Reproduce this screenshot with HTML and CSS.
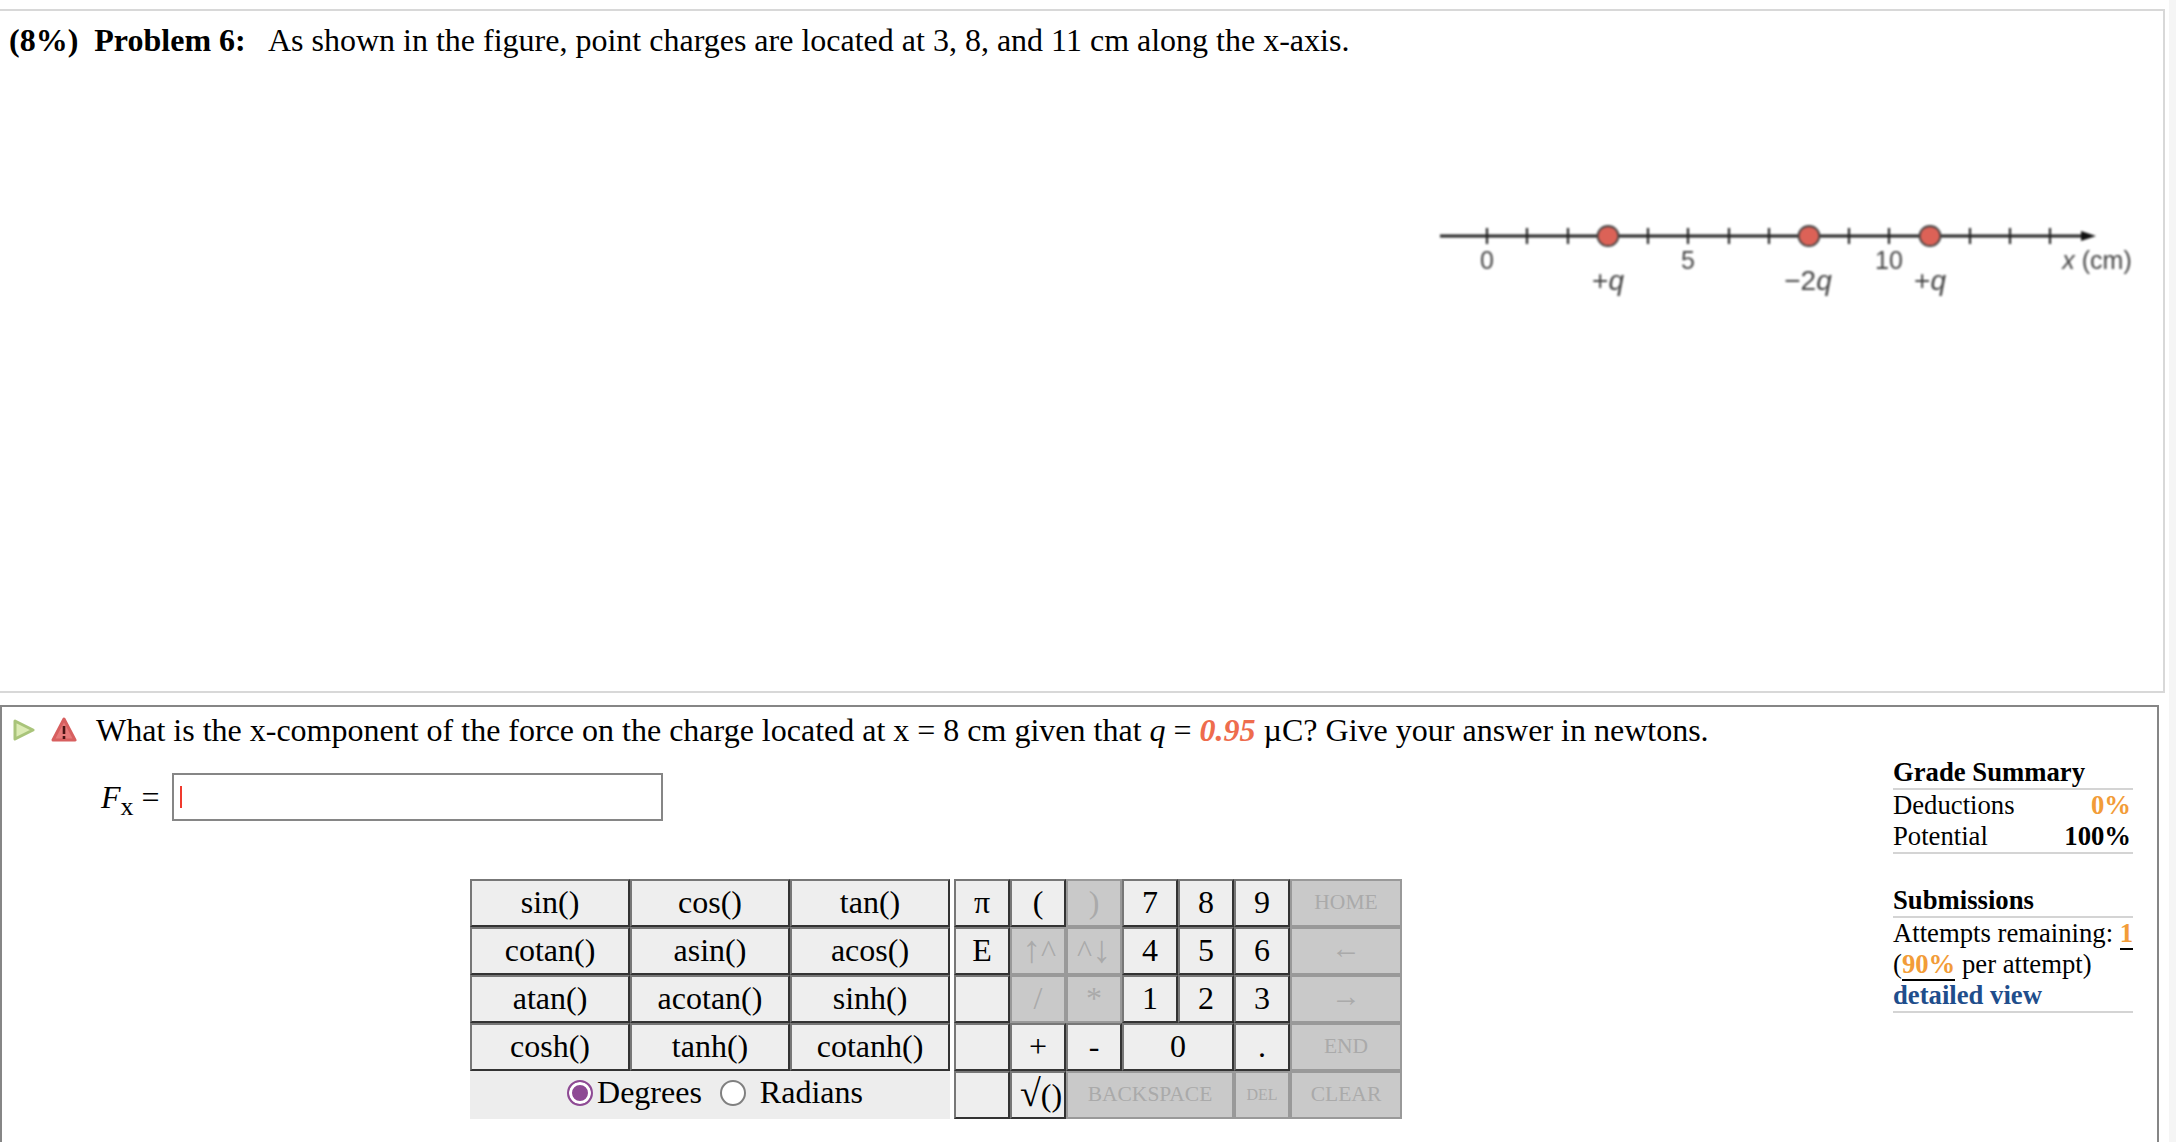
FILE: index.html
```html
<!DOCTYPE html>
<html lang="en">
<head>
<meta charset="utf-8">
<title>Problem 6</title>
<link rel="stylesheet" href="styles.css">
</head>
<body>
<section class="statement">
  <p class="intro"><b>(8%)&nbsp; Problem 6:</b>&nbsp;&nbsp; As shown in the figure, point charges are located at 3, 8, and 11 cm along the x-axis.</p>
  <div class="figure">
    <svg class="axis" width="720" height="90" viewBox="0 0 720 90" xmlns="http://www.w3.org/2000/svg">
      <line x1="0" y1="25" x2="648" y2="25" stroke="#222" stroke-width="3"/>
      <path d="M641 20 L656 25 L641 30 Z" fill="#111"/>
      <g stroke="#222" stroke-width="2.2">
        <path d="M47 17V33M87 17V33M128 17V33M208 17V33M248 17V33M289 17V33M329 17V33M409 17V33M449 17V33M530 17V33M570 17V33M610 17V33"/>
      </g>
      <g fill="#dc6257" stroke="#444" stroke-width="1.8">
        <ellipse cx="168" cy="25" rx="10.5" ry="10"/>
        <ellipse cx="369" cy="25" rx="10.5" ry="10"/>
        <ellipse cx="490" cy="25" rx="10.5" ry="10"/>
      </g>
      <g class="tick-label" text-anchor="middle">
        <text x="47" y="58">0</text>
        <text x="248" y="58">5</text>
        <text x="449" y="58">10</text>
        <text x="657" y="58"><tspan font-style="italic">x</tspan> (cm)</text>
        <text class="charge" x="168" y="79"><tspan>+</tspan><tspan font-style="italic">q</tspan></text>
        <text class="charge" x="368" y="79"><tspan>−2</tspan><tspan font-style="italic">q</tspan></text>
        <text class="charge" x="490" y="79"><tspan>+</tspan><tspan font-style="italic">q</tspan></text>
      </g>
    </svg>
  </div>
</section>

<section class="question">
  <div class="work">
    <p class="prompt">
      <svg class="icon play" width="24" height="26" viewBox="0 0 24 26" xmlns="http://www.w3.org/2000/svg"><path d="M3 4 L21 13 L3 22 Z" fill="#dcebb4" stroke="#a9c47a" stroke-width="3" stroke-linejoin="round"/></svg>
      <svg class="icon warn" width="28" height="28" viewBox="0 0 28 28" xmlns="http://www.w3.org/2000/svg"><path d="M14 3 L25 24 H3 Z" fill="#e77a7a" stroke="#d75f5f" stroke-width="3" stroke-linejoin="round"/><path d="M14 10V18M14 20V23" stroke="#4a1414" stroke-width="2.6"/></svg>
      <span>What is the x-component of the force on the charge located at x = 8 cm given that <i>q</i> = <b class="given">0.95</b> µC? Give your answer in newtons.</span>
    </p>
    <div class="answer">
      <span class="sym"><i>F</i><sub>x</sub> =</span>
      <div class="field"><span class="caret"></span></div>
    </div>
    <div class="pad">
      <div class="funcs">
        <button class="key">sin()</button><button class="key">cos()</button><button class="key">tan()</button>
        <button class="key">cotan()</button><button class="key">asin()</button><button class="key">acos()</button>
        <button class="key">atan()</button><button class="key">acotan()</button><button class="key">sinh()</button>
        <button class="key">cosh()</button><button class="key">tanh()</button><button class="key">cotanh()</button>
        <div class="mode">
          <span class="radio on"></span><span>Degrees</span>
          <span class="radio second"></span><span class="rad-label">Radians</span>
        </div>
      </div>
      <div class="keys">
        <button class="key">π</button><button class="key">(</button><button class="key off">)</button><button class="key">7</button><button class="key">8</button><button class="key">9</button><button class="key off word w2">HOME</button>
        <button class="key">E</button><button class="key off nudge"><span class="big">↑</span>^</button><button class="key off">^<span class="big">↓</span></button><button class="key">4</button><button class="key">5</button><button class="key">6</button><button class="key off arrow w2">←</button>
        <button class="key"></button><button class="key off">/</button><button class="key off">*</button><button class="key">1</button><button class="key">2</button><button class="key">3</button><button class="key off arrow w2">→</button>
        <button class="key"></button><button class="key">+</button><button class="key">-</button><button class="key w2">0</button><button class="key">.</button><button class="key off word w2">END</button>
        <button class="key"></button><button class="key root"><span class="surd">√</span>()</button><button class="key off word w3">BACKSPACE</button><button class="key off small">DEL</button><button class="key off word w2">CLEAR</button>
      </div>
    </div>
  </div>
  <aside class="side">
    <h3>Grade Summary</h3>
    <div class="row"><span>Deductions</span><b class="orange">0%</b></div>
    <div class="row last"><span>Potential</span><b>100%</b></div>
    <h3 class="sub">Submissions</h3>
    <div class="attempts">Attempts remaining: <b class="orange u">1</b><br>(<b class="orange u">90%</b> per attempt)<br><a class="link">detailed view</a></div>
  </aside>
</section>
</body>
</html>
```
FILE: styles.css
```css
* { box-sizing: border-box; }
html, body { margin: 0; height: 100%; }
body {
  width: 2176px;
  height: 1142px;
  overflow: hidden;
  padding-top: 9px;
  background: linear-gradient(to right, #fff 2169px, #f5f5f5 2169px);
  color: #000;
  font-family: "Liberation Serif", "Times New Roman", serif;
  font-size: 32px;
}
.statement {
  height: 684px;
  width: 2165px;
  border-top: 2px solid #d8d8d8;
  border-bottom: 2px solid #d8d8d8;
  border-right: 2px solid #d8d8d8;
  padding: 11px 0 0 9px;
}
.intro { margin: 0; line-height: 36px; }
.figure { display: flex; justify-content: flex-end; margin-top: 153px; filter: blur(0.8px); }
.axis { display: block; margin-right: 3px; }
.tick-label { font-family: "Liberation Sans", Arial, sans-serif; font-size: 25px; fill: #444; }
.charge { font-size: 28px; }

.question {
  margin: 12px 0 0 0;
  width: 2159px;
  height: 440px;
  border-top: 2px solid #868686;
  border-left: 2px solid #868686;
  border-right: 2px solid #868686;
  display: flex;
}
.work { flex: 1; min-width: 0; padding: 1px 0 0 10px; }
.prompt { margin: 0; display: flex; align-items: center; line-height: 44px; white-space: nowrap; }
.icon { flex: none; filter: blur(0.5px); }
.play { margin-right: 14px; }
.warn { margin-right: 18px; }
.given { color: #ee6c4d; font-style: italic; }
.answer { display: flex; align-items: center; margin: 21px 0 0 89px; gap: 12px; }
.sym { white-space: nowrap; }
.sym sub { font-size: 26px; line-height: 0; }
.field { width: 491px; height: 48px; border: 2px solid #868686; display: flex; align-items: center; padding-left: 6px; }
.caret { width: 2px; height: 22px; background: #f03a2e; }
.pad { display: flex; gap: 4px; margin: 58px 0 0 458px; }
.funcs { display: grid; grid-template-columns: repeat(3, 160px); grid-auto-rows: 48px; }
.keys { display: grid; grid-template-columns: repeat(8, 56px); grid-auto-rows: 48px; }
.key {
  padding: 0 0 2px 0;
  margin: 0;
  background: #eee;
  border: 2px solid;
  border-color: #777 #333 #333 #777;
  color: #000;
  font: inherit;
  font-size: 32px;
  line-height: 1;
  white-space: nowrap;
  overflow: hidden;
}
.off { background: #c9c9c9; border-color: #999; color: #aaa; }
.word { font-size: 21.5px; padding-bottom: 0; }
.arrow { font-size: 30px; padding-bottom: 7px; }
.small { font-size: 16px; padding-bottom: 0; }
.big { font-size: 38px; line-height: 32px; }
.nudge { padding-left: 2px; }
.root { padding-left: 6px; }
.surd { font-size: 38px; line-height: 32px; }
.w2 { grid-column: span 2; }
.w3 { grid-column: span 3; }
.mode { grid-column: span 3; background: #ededed; display: flex; align-items: center; justify-content: center; padding: 0 0 5px 10px; }
.radio { width: 26px; height: 26px; border-radius: 50%; border: 2px solid #808080; background: #fff; margin-right: 4px; }
.radio.on { border-color: #8e4a94; box-shadow: inset 0 0 0 3px #fff; background: #8e4a94; }
.radio.second { margin-left: 18px; margin-right: 0; }
.rad-label { margin-left: 14px; }

.side { width: 264px; flex: none; padding: 50px 24px 0 0; margin-left: auto; font-size: 26.7px; line-height: 31px; }
.side h3 { margin: 0; font-size: 26.7px; line-height: 31px; border-bottom: 2px solid #d4d4d4; }
.side h3.sub { margin-top: 31px; }
.row { display: flex; justify-content: space-between; padding-right: 2px; }
.row.last { border-bottom: 2px solid #d4d4d4; }
.orange { color: #f29c38; }
.u { border-bottom: 2px solid #000; }
.attempts { border-bottom: 2px solid #d4d4d4; white-space: nowrap; }
.link { color: #1f4e8c; font-weight: bold; }
```
